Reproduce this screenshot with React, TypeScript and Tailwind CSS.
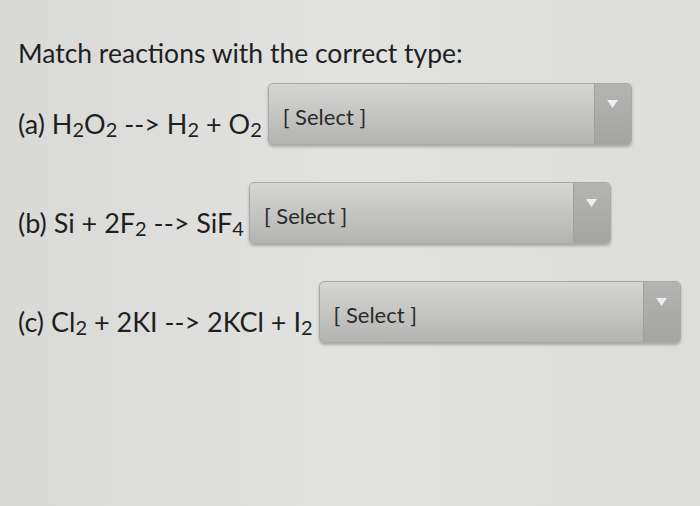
import React from "react";

type Part = string | { sub: string };

function Formula({ parts }: { parts: Part[] }) {
  return (
    <span className="whitespace-pre">
      {parts.map((p, i) =>
        typeof p === "string" ? (
          <span key={i}>{p}</span>
        ) : (
          <sub key={i} className="text-[20px] relative top-[3px]">
            {p.sub}
          </sub>
        )
      )}
    </span>
  );
}

function SelectBox({ width }: { width: string }) {
  return (
    <div
      className={`${width} h-[62px] flex rounded-[5px] border border-[#a9a9a7] bg-gradient-to-b from-[#d6d6d4] to-[#b3b3b1] shadow-[0_2px_3px_rgba(0,0,0,0.25)] overflow-hidden`}
    >
      <div className="flex-1 pl-[14px] pt-[22px] text-[22px] leading-none text-[#2a2a2a]">
        [ Select ]
      </div>
      <div className="w-[37px] flex justify-center pt-[16px] bg-gradient-to-b from-[#b4b4b2] to-[#a4a4a2] border-l border-[#9f9f9d]">
        <svg width="11" height="8" viewBox="0 0 11 8">
          <path d="M0 0 L11 0 L5.5 8 Z" fill="#efefef" />
        </svg>
      </div>
    </div>
  );
}

export default function App() {
  return (
    <div
      className="w-[700px] h-[506px] bg-gradient-to-r from-[#d9dad8] via-[#e2e3e1] to-[#dddedc] text-[#1f1f1f] pl-[18px] pt-[36px]"
      style={{ fontFamily: "Lato, 'Open Sans', sans-serif" }}
    >
      <h1 className="text-[26.5px] leading-[34px] font-normal">
        Match reactions with the correct type:
      </h1>

      <div className="mt-[13px] flex items-center gap-[6px]">
        <div className="text-[27px] leading-none pt-[18px]">
          <Formula parts={["(a) H", { sub: "2" }, "O", { sub: "2" }, " --> H", { sub: "2" }, " + O", { sub: "2" }]} />
        </div>
        <SelectBox width="w-[364px]" />
      </div>

      <div className="mt-[37px] flex items-center gap-[5px]">
        <div className="text-[27px] leading-none pt-[18px]">
          <Formula parts={["(b) Si + 2F", { sub: "2" }, " --> SiF", { sub: "4" }]} />
        </div>
        <SelectBox width="w-[362px]" />
      </div>

      <div className="mt-[37px] flex items-center gap-[6px]">
        <div className="text-[27px] leading-none pt-[18px]">
          <Formula parts={["(c) Cl", { sub: "2" }, " + 2KI --> 2KCl + I", { sub: "2" }]} />
        </div>
        <SelectBox width="w-[362px]" />
      </div>
    </div>
  );
}
